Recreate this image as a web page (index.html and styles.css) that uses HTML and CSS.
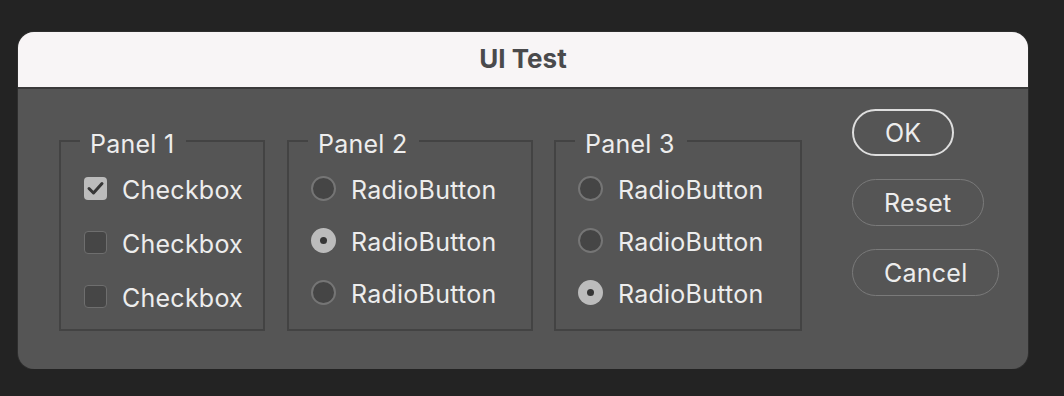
FILE: index.html
```html
<!DOCTYPE html>
<html lang="en">
<head>
    <meta charset="UTF-8">
    <title>UI Test</title>
    <link rel="stylesheet" href="styles.css">
</head>
<body>
<div class="dialog">
    <div class="title-bar">UI Test</div>
    <div class="content">
        <fieldset class="panel panel-1">
            <legend>Panel 1</legend>
            <ul class="items check-list">
                <li><span class="checkbox checked">
                    <svg viewBox="0 0 23 23" width="23" height="23"><path d="M5 11.5 L9.5 16 L18 6.5" fill="none" stroke="#363636" stroke-width="3" stroke-linecap="round" stroke-linejoin="round"/></svg>
                </span>Checkbox</li>
                <li><span class="checkbox"></span>Checkbox</li>
                <li><span class="checkbox"></span>Checkbox</li>
            </ul>
        </fieldset>
        <fieldset class="panel panel-2">
            <legend>Panel 2</legend>
            <ul class="items radio-list">
                <li><span class="radio"></span>RadioButton</li>
                <li><span class="radio checked"></span>RadioButton</li>
                <li><span class="radio"></span>RadioButton</li>
            </ul>
        </fieldset>
        <fieldset class="panel panel-3">
            <legend>Panel 3</legend>
            <ul class="items radio-list">
                <li><span class="radio"></span>RadioButton</li>
                <li><span class="radio"></span>RadioButton</li>
                <li><span class="radio checked"></span>RadioButton</li>
            </ul>
        </fieldset>
        <div class="buttons">
            <button class="btn default">OK</button>
            <button class="btn">Reset</button>
            <button class="btn">Cancel</button>
        </div>
    </div>
</div>
</body>
</html>
```

FILE: styles.css
```css
*{
    margin: 0;
    padding: 0;
    box-sizing: border-box;
}
body{
    background-color: #232323;
    font-family: "Inter", "Noto Sans", sans-serif;
    color: #ededed;
}
.dialog{
    width: 1010px;
    height: 337px;
    margin: 32px 0 0 18px;
    border-radius: 16px;
    overflow: hidden;
    background-color: #555555;
    box-shadow: 0 0 0 1px rgba(255,255,255,0.05);
}
.title-bar{
    height: 57px;
    padding-bottom: 2px;
    line-height: 53px;
    text-align: center;
    font-size: 26px;
    font-weight: 700;
    color: #4a4a4c;
    background-color: #f8f5f6;
    border-bottom: 2px solid #3a3a3a;
}
.content{
    display: flex;
    align-items: flex-start;
    padding: 20px 0 0 41px;
}
.panel{
    margin-top: 16px;
    border: 2px solid #434343;
    padding: 0 0 0 19px;
    font-size: 25px;
    letter-spacing: 0.25px;
}
.panel-1{ width: 206px; height: 206px; }
.panel-2{ width: 246px; height: 206px; margin-left: 22px; }
.panel-3{ width: 248px; height: 206px; margin-left: 21px; }
legend{
    padding: 6px 12px 0 10px;
    line-height: 26px;
}
.items{
    list-style: none;
    padding-left: 4px;
}
.items li{
    display: flex;
    align-items: center;
    white-space: nowrap;
}
.check-list{ padding-top: 6px; }
.check-list li{ height: 54px; }
.radio-list{ padding-top: 7px; padding-left: 3px; }
.radio-list li{ height: 52px; }
.checkbox{
    width: 23px;
    height: 23px;
    margin: 0 15px 3px 0;
    border-radius: 4px;
    border: 1.5px solid #6e6e6e;
    background-color: #464646;
    flex-shrink: 0;
}
.checkbox.checked{
    border: none;
    background-color: #bcbcbc;
}
.checkbox svg{
    display: block;
}
.radio{
    width: 25px;
    height: 25px;
    margin: 0 15px 3px 0;
    border-radius: 50%;
    border: 2px solid #757575;
    background-color: #454545;
    flex-shrink: 0;
    display: flex;
    align-items: center;
    justify-content: center;
}
.radio.checked{
    border: none;
    background-color: #bcbcbc;
}
.radio.checked::after{
    content: "";
    width: 7px;
    height: 7px;
    border-radius: 50%;
    background-color: #363636;
}
.buttons{
    display: flex;
    flex-direction: column;
    align-items: flex-start;
    gap: 23px;
    margin-left: 50px;
}
.btn{
    height: 47px;
    padding: 0 31px;
    border-radius: 24px;
    border: 1.5px solid #7a7a7a;
    background: transparent;
    color: #ededed;
    font-family: inherit;
    font-size: 25px;
    letter-spacing: 0.25px;
}
.btn.default{
    border: 2px solid #dedede;
}
```
